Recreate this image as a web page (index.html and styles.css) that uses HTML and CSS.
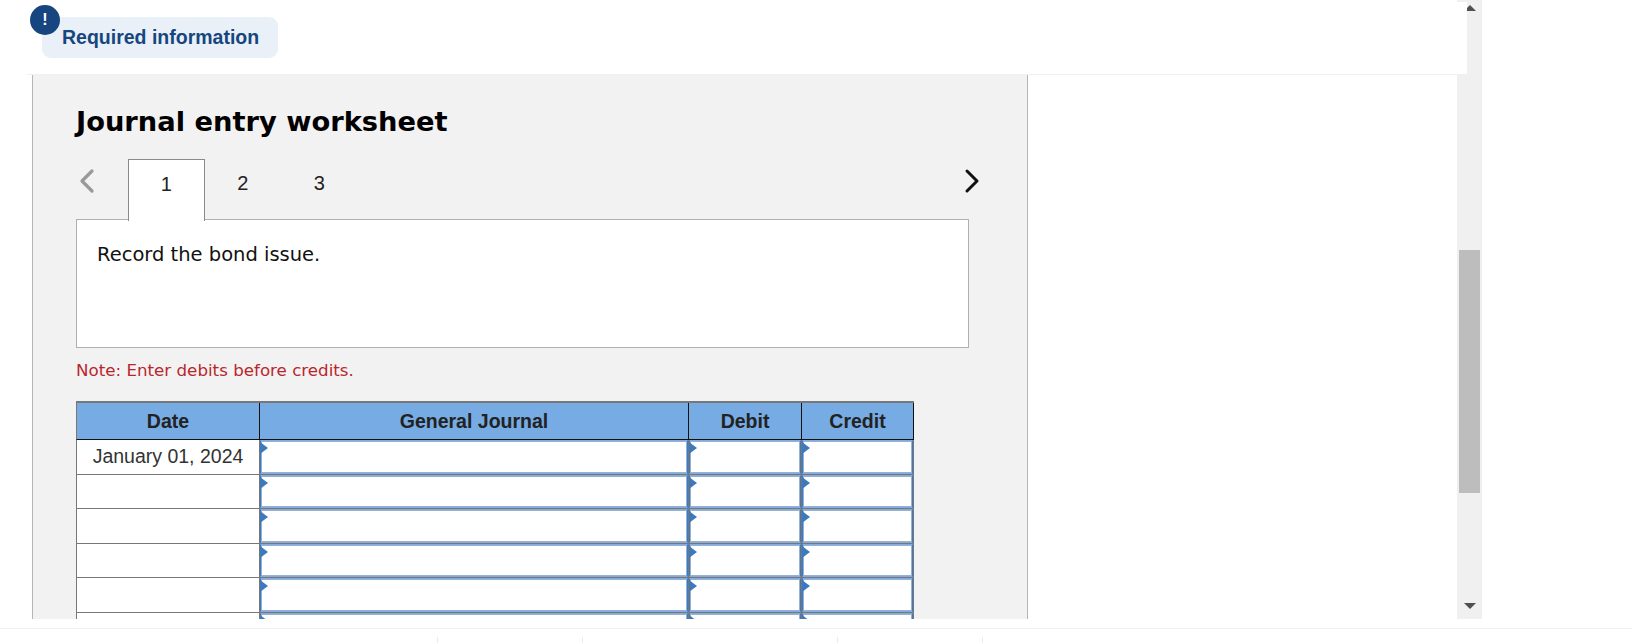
FILE: index.html
```html
<!DOCTYPE html>
<html lang="en">
<head>
    <meta charset="UTF-8">
    <meta name="viewport" content="width=device-width, initial-scale=1.0">
    <title>Journal entry worksheet</title>
    <link rel="stylesheet" href="styles.css">
</head>
<body>
    <div class="frame">
        <div class="main">
            <!-- Required information banner -->
            <div class="header">
                <div class="badge">
                    <span class="badge-icon">!</span>
                    Required information
                </div>
            </div>

            <!-- Worksheet panel -->
            <div class="panel">
                <h2>Journal entry worksheet</h2>

                <div class="tabs">
                    <button class="chevron chevron-prev" type="button" aria-label="Previous">
                        <svg width="18" height="26" viewBox="0 0 18 26"><path d="M15 3 L5 13 L15 23" fill="none" stroke="#999" stroke-width="3.2" stroke-linecap="round" stroke-linejoin="round"/></svg>
                    </button>
                    <div class="tab tab-active">1</div>
                    <div class="tab">2</div>
                    <div class="tab">3</div>
                    <button class="chevron chevron-next" type="button" aria-label="Next">
                        <svg width="18" height="26" viewBox="0 0 18 26"><path d="M4 3 L14 13 L4 23" fill="none" stroke="#111" stroke-width="3" stroke-linecap="round" stroke-linejoin="round"/></svg>
                    </button>
                </div>

                <div class="prompt">Record the bond issue.</div>
                <p class="note">Note: Enter debits before credits.</p>

                <table class="journal">
                    <thead>
                        <tr>
                            <th class="col-date">Date</th>
                            <th class="col-account">General Journal</th>
                            <th class="col-debit">Debit</th>
                            <th class="col-credit">Credit</th>
                        </tr>
                    </thead>
                    <tbody>
                        <tr>
                            <td class="date">January 01, 2024</td>
                            <td><div class="field"></div></td>
                            <td><div class="field"></div></td>
                            <td><div class="field"></div></td>
                        </tr>
                        <tr>
                            <td class="date"></td>
                            <td><div class="field"></div></td>
                            <td><div class="field"></div></td>
                            <td><div class="field"></div></td>
                        </tr>
                        <tr>
                            <td class="date"></td>
                            <td><div class="field"></div></td>
                            <td><div class="field"></div></td>
                            <td><div class="field"></div></td>
                        </tr>
                        <tr>
                            <td class="date"></td>
                            <td><div class="field"></div></td>
                            <td><div class="field"></div></td>
                            <td><div class="field"></div></td>
                        </tr>
                        <tr>
                            <td class="date"></td>
                            <td><div class="field"></div></td>
                            <td><div class="field"></div></td>
                            <td><div class="field"></div></td>
                        </tr>
                        <tr>
                            <td class="date"></td>
                            <td><div class="field"></div></td>
                            <td><div class="field"></div></td>
                            <td><div class="field"></div></td>
                        </tr>
                    </tbody>
                </table>
            </div>
        </div>

        <!-- Scrollbar -->
        <div class="scrollbar">
            <span class="arrow-up"></span>
            <span class="thumb"></span>
            <span class="arrow-down"></span>
        </div>
    </div>

    <!-- Footer strip -->
    <div class="footer">
        <span class="footer-cell footer-a"></span>
        <span class="footer-cell footer-b"></span>
        <span class="footer-cell footer-c"></span>
        <span class="footer-cell footer-b"></span>
    </div>
</body>
</html>
```

FILE: styles.css
```css
body {
    font-family: 'Liberation Sans', Arial, sans-serif;
    margin: 0;
    padding: 0;
    background-color: #ffffff;
    color: #222;
    overflow: hidden;
}
.frame {
    display: flex;
    height: 619px;
    width: 1482px;
    overflow: hidden;
}
.main {
    flex: none;
    width: 1457px;
}
.header {
    position: relative;
    z-index: 1;
    box-sizing: border-box;
    width: 1440px;
    height: 73px;
    margin-top: 2px;
    margin-left: 27px;
    background-color: #ffffff;
    border-bottom: 1px solid #f0f0f0;
    padding-top: 15px;
    padding-left: 15px;
}
.badge {
    position: relative;
    box-sizing: border-box;
    width: 236px;
    height: 41px;
    padding-left: 20px;
    line-height: 41px;
    font-size: 19.5px;
    font-weight: bold;
    color: #17467f;
    background-color: #e9f0f8;
    border-radius: 9px;
}
.badge-icon {
    position: absolute;
    left: -12px;
    top: -12px;
    width: 30px;
    height: 30px;
    line-height: 30px;
    border-radius: 50%;
    background-color: #17457f;
    color: #fff;
    font-size: 16px;
    text-align: center;
}
.panel {
    box-sizing: border-box;
    width: 996px;
    height: 560px;
    margin-left: 32px;
    padding: 0 43px;
    background-color: #f2f2f2;
    border-left: 1px solid #b5b5b5;
    border-right: 1px solid #b5b5b5;
}
h2 {
    margin: 0;
    padding-top: 27px;
    height: 57px;
    line-height: 40px;
    box-sizing: content-box;
    font-family: 'DejaVu Sans', Verdana, sans-serif;
    font-size: 27.3px;
    font-weight: bold;
    color: #000;
}
.tabs {
    display: flex;
    height: 60px;
    margin-right: 3px;
}
.chevron {
    border: none;
    background: none;
    padding: 0;
    display: block;
    height: 26px;
    margin-top: 9px;
}
.chevron-prev {
    width: 18px;
    margin-left: 1px;
    margin-right: 33px;
}
.chevron-next {
    width: 18px;
    margin-left: auto;
}
.tab {
    box-sizing: border-box;
    width: 76.5px;
    padding-top: 13px;
    text-align: center;
    font-size: 20px;
    line-height: 23px;
    color: #222;
}
.tab-active {
    position: relative;
    z-index: 1;
    height: 62px;
    background-color: #fff;
    border: 1px solid #8a8a8a;
    border-bottom: none;
}
.prompt {
    box-sizing: border-box;
    width: 893px;
    height: 129px;
    padding: 21px 20px;
    background-color: #fff;
    border: 1px solid #b0b0b0;
    font-family: 'DejaVu Sans', Verdana, sans-serif;
    font-size: 19.5px;
    line-height: 28px;
    color: #111;
}
.note {
    margin: 11px 0 0;
    height: 42px;
    line-height: 22px;
    font-family: 'DejaVu Sans', Verdana, sans-serif;
    font-size: 16.7px;
    color: #b9272d;
}
.journal {
    table-layout: fixed;
    width: 838px;
    border-collapse: separate;
    border-spacing: 0;
    border-top: 2px solid #777;
    background-color: #fff;
}
.journal th {
    height: 36px;
    padding: 0;
    font-size: 19.5px;
    font-weight: bold;
    color: #222;
    background-color: #76abe4;
    border-bottom: 1px solid #111;
    border-right: 1px solid #111;
}
.journal th:first-child {
    border-left: 1px solid #777;
}
.col-date {
    width: 182px;
}
.col-account {
    width: 428px;
}
.col-debit {
    width: 112px;
}
.col-credit {
    width: 111px;
}
.journal td {
    height: 33.5px;
    padding: 0;
    border-bottom: 1px solid #777;
    border-right: 1px solid #777;
}
.journal .date {
    border-left: 1px solid #777;
    text-align: center;
    font-size: 19.5px;
    color: #333;
}
.field {
    position: relative;
    box-sizing: border-box;
    height: 33.5px;
    background-color: #fff;
    border: 1px solid #86abda;
    border-left-color: #3f78bb;
    border-right-color: #3f78bb;
    box-shadow: inset 0 0 0 1px #92b2da;
}
.field::before {
    content: "";
    position: absolute;
    left: -1px;
    top: 1px;
    border-left: 8px solid #3c79bd;
    border-top: 6.5px solid transparent;
    border-bottom: 6.5px solid transparent;
}
.scrollbar {
    position: relative;
    flex: none;
    display: flex;
    flex-direction: column;
    align-items: center;
    width: 25px;
    background-color: #f0f0f0;
}
.arrow-up {
    width: 0;
    height: 0;
    margin-top: 5px;
    border-left: 6px solid transparent;
    border-right: 6px solid transparent;
    border-bottom: 6px solid #505050;
}
.thumb {
    width: 21px;
    height: 243px;
    margin-top: 239px;
    background-color: #bdbdbd;
}
.arrow-down {
    width: 0;
    height: 0;
    margin-top: 110px;
    border-left: 6px solid transparent;
    border-right: 6px solid transparent;
    border-top: 6px solid #505050;
}
.footer {
    display: flex;
    height: 15px;
    margin-top: 9px;
    padding-top: 8px;
    border-top: 1px solid #f0f0f0;
}
.footer-cell {
    box-sizing: border-box;
    height: 7px;
    border-right: 1px solid #ececec;
}
.footer-a {
    width: 438px;
}
.footer-b {
    width: 145px;
}
.footer-c {
    width: 255px;
}
```
